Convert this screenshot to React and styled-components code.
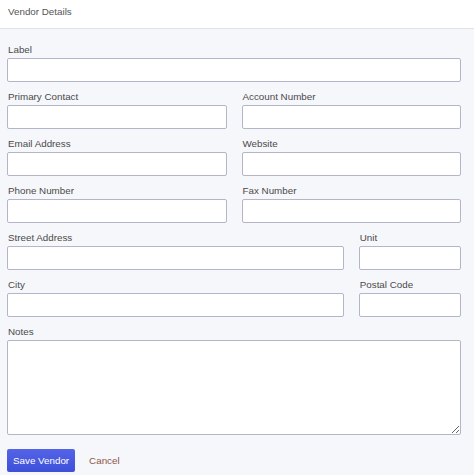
import React from 'react';
import styled, { createGlobalStyle } from 'styled-components';

const GlobalStyle = createGlobalStyle`
  html, body {
    margin: 0;
    padding: 0;
    background: #f6f7fb;
    font-family: "Liberation Sans", Arial, sans-serif;
  }
`;

// Top title bar
const Header = styled.div`
  height: 29px;
  background: #fff;
  border-bottom: 1px solid #e0e2e8;
  padding: 0 8px 6px;
  display: flex;
  align-items: center;
  box-sizing: border-box;
  font-size: 9.8px;
  color: #555;
`;

const Form = styled.form`
  padding: 15px 13px 0 7px;
`;

// 12 column grid, like a bootstrap row
const Row = styled.div`
  display: grid;
  grid-template-columns: repeat(12, 1fr);
  column-gap: 15px;
  margin-bottom: 9px;
`;

const Field = styled.div`
  grid-column: span ${(p) => p.$span || 12};
  display: flex;
  flex-direction: column;
`;

const Label = styled.label`
  font-size: 9.8px;
  line-height: 12px;
  color: #4a4a4a;
  margin: 0 0 2px 1px;
`;

const Input = styled.input`
  box-sizing: border-box;
  height: 24px;
  width: 100%;
  background: #fff;
  border: 1px solid #b3b6c8;
  border-radius: 2px;
  outline: none;
`;

const TextArea = styled.textarea`
  box-sizing: border-box;
  height: 95px;
  width: 100%;
  background: #fff;
  border: 1px solid #b3b6c8;
  border-radius: 2px;
  outline: none;
`;

const Actions = styled.div`
  display: flex;
  align-items: center;
  margin-top: 14px;
`;

const SaveButton = styled.button`
  height: 23px;
  padding: 0 6px;
  border: none;
  border-radius: 2px;
  background: linear-gradient(#5464e8, #3e4fd9);
  color: #fff;
  font-family: inherit;
  font-size: 9.8px;
  cursor: pointer;
`;

const CancelLink = styled.a`
  margin-left: 14px;
  font-size: 9.8px;
  color: #8c5548;
  text-decoration: none;
  cursor: pointer;
`;

const App = () => (
  <>
    <GlobalStyle />
    <Header>Vendor Details</Header>
    <Form onSubmit={(e) => e.preventDefault()}>
      <Row>
        <Field>
          <Label>Label</Label>
          <Input />
        </Field>
      </Row>
      <Row>
        <Field $span={6}>
          <Label>Primary Contact</Label>
          <Input />
        </Field>
        <Field $span={6}>
          <Label>Account Number</Label>
          <Input />
        </Field>
      </Row>
      <Row>
        <Field $span={6}>
          <Label>Email Address</Label>
          <Input />
        </Field>
        <Field $span={6}>
          <Label>Website</Label>
          <Input />
        </Field>
      </Row>
      <Row>
        <Field $span={6}>
          <Label>Phone Number</Label>
          <Input />
        </Field>
        <Field $span={6}>
          <Label>Fax Number</Label>
          <Input />
        </Field>
      </Row>
      <Row>
        <Field $span={9}>
          <Label>Street Address</Label>
          <Input />
        </Field>
        <Field $span={3}>
          <Label>Unit</Label>
          <Input />
        </Field>
      </Row>
      <Row>
        <Field $span={9}>
          <Label>City</Label>
          <Input />
        </Field>
        <Field $span={3}>
          <Label>Postal Code</Label>
          <Input />
        </Field>
      </Row>
      <Row>
        <Field>
          <Label>Notes</Label>
          <TextArea />
        </Field>
      </Row>
      <Actions>
        <SaveButton type="submit">Save Vendor</SaveButton>
        <CancelLink>Cancel</CancelLink>
      </Actions>
    </Form>
  </>
);

export default App;
